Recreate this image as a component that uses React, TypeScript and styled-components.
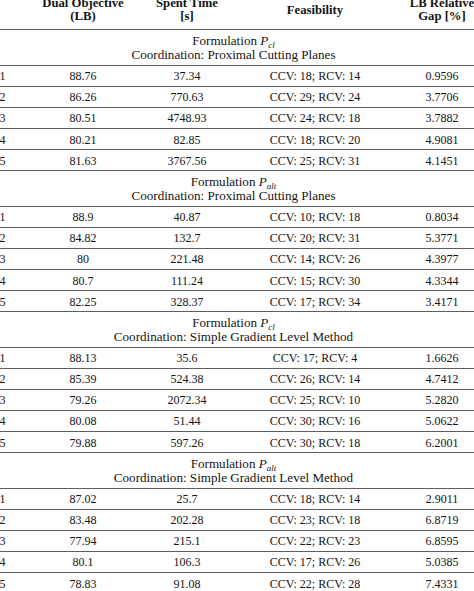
import React from "react";
import styled, { createGlobalStyle } from "styled-components";

const GlobalStyle = createGlobalStyle`
  html, body {
    margin: 0;
    padding: 0;
    background: #ffffff;
  }
  body {
    overflow: hidden;
  }
`;

const COLS = "55px 106px 102px 154px 100px";
const LINE = "1.5px solid #5e5e5e";

const Page = styled.div`
  width: 474px;
  height: 591px;
  overflow: hidden;
  background: #ffffff;
`;

const Table = styled.div`
  display: flex;
  flex-direction: column;
  width: 517px;
  margin: -9px 0 0 -25px;
  font-family: "Liberation Serif", "Times New Roman", serif;
  color: #141414;
`;

const HeaderRow = styled.div`
  display: grid;
  grid-template-columns: ${COLS};
  height: 39.25px;
  box-sizing: border-box;
  border-bottom: ${LINE};
`;

const HeadCell = styled.div`
  display: flex;
  align-items: center;
  justify-content: center;
  text-align: center;
  font-weight: 700;
  font-size: 12.7px;
  line-height: 13.2px;
`;

const SectionTitle = styled.div`
  height: 35.5px;
  box-sizing: border-box;
  padding-top: 3.45px;
  border-bottom: ${LINE};
  text-align: center;
  font-size: 13.1px;
  line-height: 14.3px;
`;

const Var = styled.span`
  font-style: italic;
`;

const Sub = styled.sub`
  font-size: 9px;
  line-height: 0;
  vertical-align: -2.5px;
  font-style: italic;
`;

const DataRow = styled.div`
  display: grid;
  grid-template-columns: ${COLS};
  height: 21.1px;
  box-sizing: border-box;
  padding-top: 3.5px;
  border-bottom: ${LINE};
  font-size: 12px;
  line-height: 14px;
`;

const Cell = styled.div`
  text-align: center;
  white-space: nowrap;
`;

type Row = [string, string, string, string];

interface Section {
  sub: string;
  method: string;
  rows: Row[];
}

const sections: Section[] = [
  {
    sub: "cl",
    method: "Proximal Cutting Planes",
    rows: [
      ["88.76", "37.34", "CCV: 18; RCV: 14", "0.9596"],
      ["86.26", "770.63", "CCV: 29; RCV: 24", "3.7706"],
      ["80.51", "4748.93", "CCV: 24; RCV: 18", "3.7882"],
      ["80.21", "82.85", "CCV: 18; RCV: 20", "4.9081"],
      ["81.63", "3767.56", "CCV: 25; RCV: 31", "4.1451"],
    ],
  },
  {
    sub: "alt",
    method: "Proximal Cutting Planes",
    rows: [
      ["88.9", "40.87", "CCV: 10; RCV: 18", "0.8034"],
      ["84.82", "132.7", "CCV: 20; RCV: 31", "5.3771"],
      ["80", "221.48", "CCV: 14; RCV: 26", "4.3977"],
      ["80.7", "111.24", "CCV: 15; RCV: 30", "4.3344"],
      ["82.25", "328.37", "CCV: 17; RCV: 34", "3.4171"],
    ],
  },
  {
    sub: "cl",
    method: "Simple Gradient Level Method",
    rows: [
      ["88.13", "35.6", "CCV: 17; RCV: 4", "1.6626"],
      ["85.39", "524.38", "CCV: 26; RCV: 14", "4.7412"],
      ["79.26", "2072.34", "CCV: 25; RCV: 10", "5.2820"],
      ["80.08", "51.44", "CCV: 30; RCV: 16", "5.0622"],
      ["79.88", "597.26", "CCV: 30; RCV: 18", "6.2001"],
    ],
  },
  {
    sub: "alt",
    method: "Simple Gradient Level Method",
    rows: [
      ["87.02", "25.7", "CCV: 18; RCV: 14", "2.9011"],
      ["83.48", "202.28", "CCV: 23; RCV: 18", "6.8719"],
      ["77.94", "215.1", "CCV: 22; RCV: 23", "6.8595"],
      ["80.1", "106.3", "CCV: 17; RCV: 26", "5.0385"],
      ["78.83", "91.08", "CCV: 22; RCV: 28", "7.4331"],
    ],
  },
];

export default function App() {
  return (
    <Page>
      <GlobalStyle />
      <Table>
        <HeaderRow>
          <HeadCell />
          <HeadCell>
            Dual Objective
            <br />
            (LB)
          </HeadCell>
          <HeadCell>
            Spent Time
            <br />
            [s]
          </HeadCell>
          <HeadCell>Feasibility</HeadCell>
          <HeadCell>
            LB Relative
            <br />
            Gap [%]
          </HeadCell>
        </HeaderRow>
        {sections.map((s, si) => (
          <React.Fragment key={si}>
            <SectionTitle>
              Formulation{" "}
              <Var>
                P<Sub>{s.sub}</Sub>
              </Var>
              <br />
              Coordination: {s.method}
            </SectionTitle>
            {s.rows.map((r, ri) => (
              <DataRow key={ri}>
                <Cell>{ri + 1}</Cell>
                {r.map((v, vi) => (
                  <Cell key={vi}>{v}</Cell>
                ))}
              </DataRow>
            ))}
          </React.Fragment>
        ))}
      </Table>
    </Page>
  );
}
